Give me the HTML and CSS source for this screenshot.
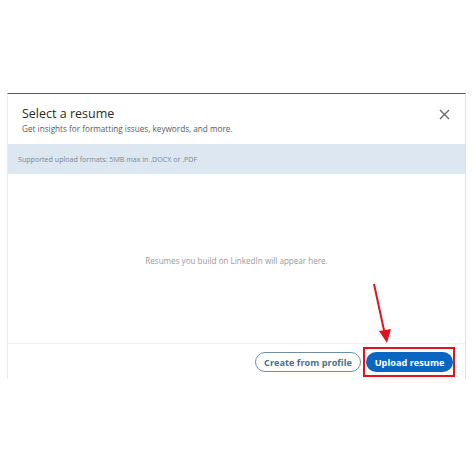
FILE: index.html
```html
<!DOCTYPE html>
<html>
<head>
<meta charset="utf-8">
<link rel="stylesheet" href="styles.css">
</head>
<body>
<div class="stage">
  <div class="modal">
    <div class="header">
      <div class="titles">
        <h2 class="title">Select a resume</h2>
        <p class="subtitle">Get insights for formatting issues, keywords, and more.</p>
      </div>
      <button class="close" aria-label="Close">
        <svg width="11" height="11" viewBox="0 0 11 11"><path d="M1 1L10 10M10 1L1 10" stroke="#6b6b6b" stroke-width="1.4" fill="none"/></svg>
      </button>
    </div>
    <div class="banner">Supported upload formats: 5MB max in .DOCX or .PDF</div>
    <div class="empty">Resumes you build on LinkedIn will appear here.</div>
    <div class="footer">
      <button class="btn btn-outline">Create from profile</button>
      <button class="btn btn-primary">Upload resume</button>
    </div>
  </div>
  <div class="highlight"></div>
  <svg class="arrow" width="30" height="70" viewBox="0 0 30 70">
    <line x1="3" y1="3" x2="14" y2="54" stroke="#e0141e" stroke-width="2"/>
    <polygon points="8,50 20,48 16,62" fill="#e0141e"/>
  </svg>
</div>
</body>
</html>
```

FILE: styles.css
```css
html, body {
  margin: 0;
  padding: 0;
  background: #ffffff;
}
body {
  font-family: "Open Sans", "Liberation Sans", sans-serif;
}
.stage {
  position: relative;
  width: 474px;
  height: 474px;
  padding-top: 93px;
  box-sizing: border-box;
}
.modal {
  margin-left: 7px;
  width: 459px;
  height: 286px;
  box-sizing: border-box;
  border-top: 1.5px solid #5a5a5a;
  border-left: 1px solid #ececec;
  border-right: 1px solid #e2e2e2;
  background: #fff;
  display: flex;
  flex-direction: column;
}
.header {
  display: flex;
  justify-content: space-between;
  align-items: flex-start;
  padding: 11px 14px 0 14px;
  height: 50px;
  box-sizing: border-box;
}
.title {
  margin: 0;
  font-weight: 400;
  font-size: 12.5px;
  line-height: 17px;
  color: #2b2b2b;
}
.subtitle {
  margin: 1px 0 0;
  font-size: 8.2px;
  line-height: 12px;
  color: #5b5b5b;
}
.close {
  border: 0;
  background: none;
  padding: 0;
  margin-top: 4px;
  margin-right: 1px;
  width: 11px;
  height: 11px;
  display: flex;
}
.banner {
  height: 30px;
  background: #dde7f1;
  display: flex;
  align-items: center;
  padding-left: 10px;
  font-size: 7.1px;
  color: #7a8794;
}
.empty {
  flex: 1;
  display: flex;
  align-items: center;
  justify-content: center;
  font-size: 8.1px;
  color: #9a9a9a;
  border-bottom: 1px solid #f0f0f0;
  padding-top: 4px;
}
.footer {
  height: 35px;
  display: flex;
  justify-content: flex-end;
  align-items: flex-start;
  padding: 8px 12px 0 0;
  box-sizing: border-box;
  gap: 5px;
}
.btn {
  height: 20px;
  border-radius: 10px;
  font-family: "Open Sans", "Liberation Sans", sans-serif;
  font-weight: 700;
  font-size: 9.2px;
  padding: 0;
  box-sizing: border-box;
  display: flex;
  align-items: center;
  justify-content: center;
}
.btn-outline {
  width: 106px;
  background: #fff;
  border: 1px solid #6d8ea8;
  color: #4b6f8c;
}
.btn-primary {
  width: 87px;
  background: #0b66c2;
  border: 0;
  color: #fff;
}
.highlight {
  position: absolute;
  left: 363px;
  top: 347px;
  width: 92px;
  height: 30px;
  box-sizing: border-box;
  border: 2px solid #e0141e;
}
.arrow {
  position: absolute;
  left: 371px;
  top: 281px;
}
```
